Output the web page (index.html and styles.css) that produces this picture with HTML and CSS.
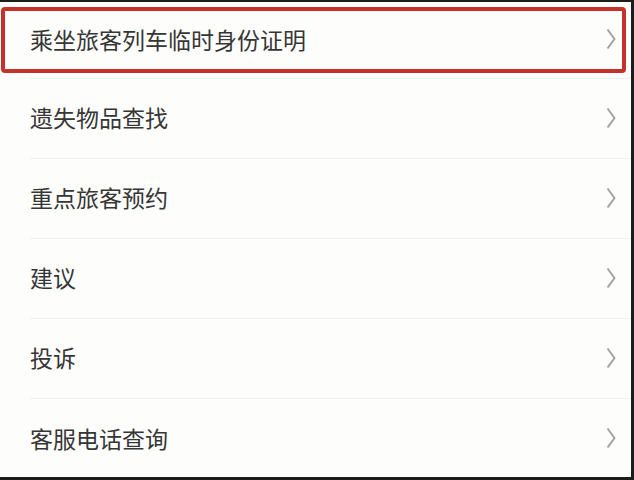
FILE: index.html
```html
<!DOCTYPE html>
<html lang="zh-CN">
<head>
<meta charset="utf-8">
<title>服务</title>
<link rel="stylesheet" href="styles.css">
</head>
<body>
<div class="screen">
  <ul class="menu">
    <li class="item item-first">
      <span class="label">乘坐旅客列车临时身份证明</span>
      <svg class="chev" viewBox="0 0 10 22" width="10" height="22"><polyline points="1.5,1.5 8.5,11 1.5,20.5"/></svg>
    </li>
    <li class="item">
      <span class="label">遗失物品查找</span>
      <svg class="chev" viewBox="0 0 10 22" width="10" height="22"><polyline points="1.5,1.5 8.5,11 1.5,20.5"/></svg>
    </li>
    <li class="item">
      <span class="label">重点旅客预约</span>
      <svg class="chev" viewBox="0 0 10 22" width="10" height="22"><polyline points="1.5,1.5 8.5,11 1.5,20.5"/></svg>
    </li>
    <li class="item">
      <span class="label">建议</span>
      <svg class="chev" viewBox="0 0 10 22" width="10" height="22"><polyline points="1.5,1.5 8.5,11 1.5,20.5"/></svg>
    </li>
    <li class="item">
      <span class="label">投诉</span>
      <svg class="chev" viewBox="0 0 10 22" width="10" height="22"><polyline points="1.5,1.5 8.5,11 1.5,20.5"/></svg>
    </li>
    <li class="item item-last">
      <span class="label">客服电话查询</span>
      <svg class="chev" viewBox="0 0 10 22" width="10" height="22"><polyline points="1.5,1.5 8.5,11 1.5,20.5"/></svg>
    </li>
  </ul>
  <div class="highlight"></div>
</div>
</body>
</html>
```
FILE: styles.css
```css
html, body {
  margin: 0;
  padding: 0;
  background: #1c1c1c;
}

.screen {
  position: relative;
  width: 634px;
  height: 480px;
  box-sizing: border-box;
  border-top: 2px solid #1c1c1c;
  border-right: 3px solid #1c1c1c;
  border-bottom: 3px solid #1c1c1c;
  background: #fdfdfc;
  overflow: hidden;
  font-family: "Noto Sans CJK SC", "Noto Sans", sans-serif;
}

.menu {
  list-style: none;
  margin: 0;
  padding: 0;
}

.item {
  display: flex;
  align-items: center;
  justify-content: space-between;
  height: 80px;
  box-sizing: border-box;
  margin-left: 30px;
  padding-right: 15px;
  padding-bottom: 2px;
  border-bottom: 1px solid #f1f1ef;
}

.item-first {
  height: 77px;
}

.item-last {
  border-bottom: none;
}

.label {
  font-size: 23px;
  line-height: 1;
  color: #363636;
}

.chev {
  display: block;
  fill: none;
  stroke: #9e9e9e;
  stroke-width: 1.9;
  stroke-linejoin: miter;
}

/* red frame around the first entry */
.highlight {
  position: absolute;
  left: 1px;
  top: 5px;
  width: 625px;
  height: 66px;
  box-sizing: border-box;
  border: 4px solid #c4322e;
  border-radius: 4px;
  pointer-events: none;
}
```
